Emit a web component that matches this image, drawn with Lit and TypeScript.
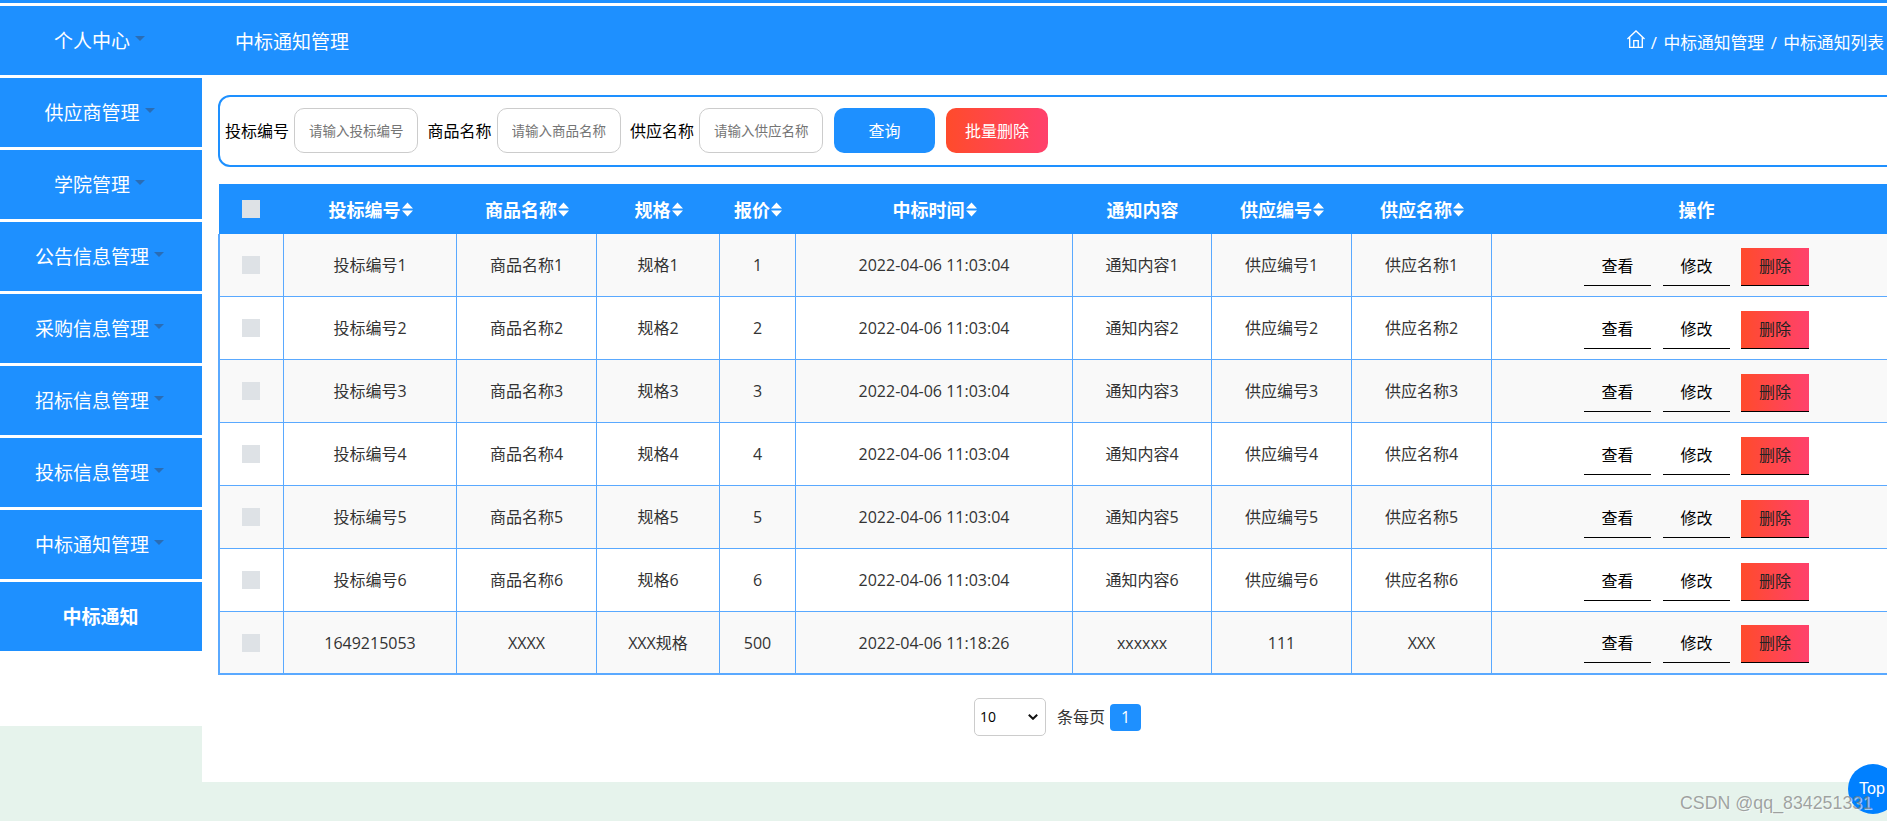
import { LitElement, html, css } from "lit";
import { customElement } from "lit/decorators.js";

const NAV = ["个人中心", "供应商管理", "学院管理", "公告信息管理", "采购信息管理", "招标信息管理", "投标信息管理", "中标通知管理"];
const COLS: [string, number, boolean][] = [
  ["投标编号", 173, true], ["商品名称", 140, true], ["规格", 123, true], ["报价", 76, true],
  ["中标时间", 277, true], ["通知内容", 139, false], ["供应编号", 140, true], ["供应名称", 140, true], ["操作", 409, false],
];
const ROWS = [1, 2, 3, 4, 5, 6].map((n) => [
  `投标编号${n}`, `商品名称${n}`, `规格${n}`, `${n}`, "2022-04-06 11:03:04", `通知内容${n}`, `供应编号${n}`, `供应名称${n}`,
]);
ROWS.push(["1649215053", "XXXX", "XXX规格", "500", "2022-04-06 11:18:26", "xxxxxx", "111", "XXX"]);
const FIELDS = ["投标编号", "商品名称", "供应名称"];

@customElement("app-root")
export class AppRoot extends LitElement {
  static styles = css`
    :host {
      display: block;
      position: relative;
      width: 1887px;
      height: 821px;
      overflow: hidden;
      background: #e6f3ec;
      font-family: "Open Sans", "Noto Sans CJK SC", sans-serif;
      line-height: 1;
    }
    .topline { height: 3px; background: #1e90ff; border-bottom: 3px solid #fff; }
    .layout { display: flex; align-items: flex-start; }
    .sidebar {
      width: 202px; height: 720px; flex: none; background: #fff;
      display: flex; flex-direction: column; gap: 3px;
    }
    .nav {
      height: 69px; box-sizing: border-box; padding: 2px 3px 0 0;
      background: #1e90ff; color: #fff; font-size: 19px;
      display: flex; align-items: center; justify-content: center; gap: 5px;
    }
    .nav.active { font-weight: 700; padding-right: 1px; }
    .caret {
      width: 0; height: 0; margin-top: -6px;
      border-left: 5px solid transparent; border-right: 5px solid transparent;
      border-top: 5px solid #2a6db5;
    }
    .main { flex: none; width: 1685px; height: 776px; background: #fff; overflow: hidden; }
    .header {
      height: 69px; background: #1e90ff; color: #fff;
      display: flex; align-items: center; justify-content: space-between;
      padding: 0 3px 0 33px;
    }
    .title { font-size: 19px; margin-top: 4px; }
    .crumbs { display: flex; align-items: center; font-size: 16.8px; margin-top: 5px; }
    .crumbs svg { width: 18px; height: 18px; margin: -7px -1px 0 0; }
    .crumbs .sep { margin: 0 6.5px; }
    .search {
      margin: 20px 0 0 16px; width: 1700px; height: 72px; box-sizing: border-box;
      border: 2px solid #1e90ff; border-radius: 12px;
      display: flex; align-items: center; padding: 0 0 1px 5px;
    }
    .search label { font-size: 16px; color: #000; width: 65px; margin-right: 4px; white-space: nowrap; }
    .search input {
      width: 124px; height: 45px; box-sizing: border-box; margin-right: 9.5px;
      border: 1px solid #ccc; border-radius: 10px; outline: none; background: #fff;
      padding: 0 0 0 14px; font: inherit; font-size: 13.5px;
    }
    .search input::placeholder { color: #757575; }
    .btn {
      height: 45px; border: none; border-radius: 10px; color: #fff; font: inherit; font-size: 16px;
      padding: 0; display: inline-flex; align-items: center; justify-content: center;
    }
    .query { width: 101px; background: #1e90ff; margin-left: 1.5px; }
    .batch { width: 102px; margin-left: 11px; background: linear-gradient(to right, #ff4b2b, #ff416c); }
    table {
      margin: 17px 0 0 16px; border-collapse: separate; border-spacing: 0;
      table-layout: fixed; width: 1683px;
    }
    th {
      height: 50px; padding: 0; background: #1e90ff; color: #fff; font-size: 18px; font-weight: 700;
      box-sizing: border-box; text-align: center;
    }
    th:first-child { border-left: 1px solid #fff; }
    th .inner { display: inline-flex; align-items: center; padding-top: 2px; }
    th svg { width: 11px; height: 15px; margin: -2px 0 0 1px; }
    td {
      height: 63px; padding: 0; box-sizing: border-box; text-align: center; color: #333; font-size: 16px;
      border-right: 1px solid #5aa9ff; border-bottom: 1px solid #5aa9ff;
    }
    td:first-child { border-left: 2px solid #5aa9ff; }
    td:last-child { border-right: none; }
    tr:last-child td { border-bottom-width: 2px; }
    tbody tr:nth-child(odd) td { background: #f9f9f9; }
    tbody tr:nth-child(even) td { background: #fff; }
    .check { display: block; width: 18px; height: 18px; background: #dee2e6; margin: 0 auto 0 23px; }
    td:first-child .check { margin-left: 22px; }
    .ops { display: inline-flex; align-items: center; margin-top: 3px; }
    .op {
      width: 67px; height: 38px; box-sizing: border-box; border-bottom: 1px solid #000; color: #000;
      font-size: 16px; display: inline-flex; align-items: center; justify-content: center; margin-right: 12px;
      padding-bottom: 1px;
    }
    .op.del {
      width: 68px; margin: 0 0 0 -1px; color: #222; font-size: 16px;
      background: linear-gradient(to right, #ff4b2b, #ff416c);
    }
    .pager { display: flex; align-items: center; margin: 23px 0 0 772px; color: #333; font-size: 16px; }
    .selwrap { position: relative; display: block; width: 72px; height: 38px; }
    .selwrap select {
      appearance: none; display: block;
      width: 72px; height: 38px; box-sizing: border-box; border: 1px solid #ccc; border-radius: 5px;
      background: #fff; font: inherit; font-size: 14px; color: #000; padding: 0 0 0 5px; outline: none;
    }
    .selwrap svg { position: absolute; left: 54px; top: 16px; width: 10px; height: 6px; pointer-events: none; }
    .pager .per { margin: 0 5px 0 11px; }
    .pager .page {
      width: 31px; height: 27px; border-radius: 4px; background: #1e90ff; color: #fff; font-size: 16px;
      display: flex; align-items: center; justify-content: center;
    }
    .top {
      position: absolute; left: 1848px; top: 764px; width: 50px; height: 50px; border-radius: 50%;
      background: #0080ff; color: #fff; font: 16px "Liberation Sans", sans-serif;
      display: flex; align-items: center; padding-left: 11px; box-sizing: border-box;
    }
    .mark {
      position: absolute; left: 1680px; top: 793px; font: 17.8px "Liberation Sans", sans-serif;
      color: rgba(125, 125, 125, 0.7); text-shadow: 1px 1px 0 rgba(255, 255, 255, 0.6); white-space: nowrap;
    }
  `;

  private sortIcon() {
    return html`<svg viewBox="0 0 11 15"><path d="M5.5 0.5 L11 6.5 H0 Z M5.5 14.5 L0 8.5 H11 Z" fill="#fff"></path></svg>`;
  }

  render() {
    return html`
      <div class="topline"></div>
      <div class="layout">
        <nav class="sidebar">
          ${NAV.map((n) => html`<div class="nav"><span>${n}</span><i class="caret"></i></div>`)}
          <div class="nav active"><span>中标通知</span></div>
        </nav>
        <div class="main">
          <header class="header">
            <div class="title">中标通知管理</div>
            <div class="crumbs">
              <svg viewBox="0 0 16 16" fill="none" stroke="#fff" stroke-width="1.2">
                <path d="M0.4 8 L8 0.8 L15.6 8"></path>
                <path d="M2.4 6.4 V15.4 H13.6 V6.4"></path>
                <path d="M6 15.4 V9.4 H10 V15.4"></path>
              </svg>
              <span class="sep">/</span><span>中标通知管理</span><span class="sep">/</span><span>中标通知列表</span>
            </div>
          </header>
          <div class="search">
            ${FIELDS.map((f) => html`<label>${f}</label><input placeholder="请输入${f}" />`)}
            <button class="btn query">查询</button>
            <button class="btn batch">批量删除</button>
          </div>
          <table>
            <colgroup>
              <col style="width:66px" />
              ${COLS.map((c) => html`<col style="width:${c[1]}px" />`)}
            </colgroup>
            <thead>
              <tr>
                <th><i class="check"></i></th>
                ${COLS.map((c) => html`<th><span class="inner">${c[0]}${c[2] ? this.sortIcon() : ""}</span></th>`)}
              </tr>
            </thead>
            <tbody>
              ${ROWS.map((r) => html`<tr>
                <td><i class="check"></i></td>
                ${r.map((v) => html`<td>${v}</td>`)}
                <td><div class="ops"><span class="op">查看</span><span class="op">修改</span><span class="op del">删除</span></div></td>
              </tr>`)}
            </tbody>
          </table>
          <div class="pager">
            <span class="selwrap">
              <select><option>10</option><option>20</option></select>
              <svg viewBox="0 0 10 6" fill="none" stroke="#111" stroke-width="2"><path d="M0.8 0.8 L5 4.8 L9.2 0.8"></path></svg>
            </span>
            <span class="per">条每页</span>
            <span class="page">1</span>
          </div>
        </div>
      </div>
      <div class="top">Top</div>
      <div class="mark">CSDN @qq_834251331</div>
    `;
  }
}
